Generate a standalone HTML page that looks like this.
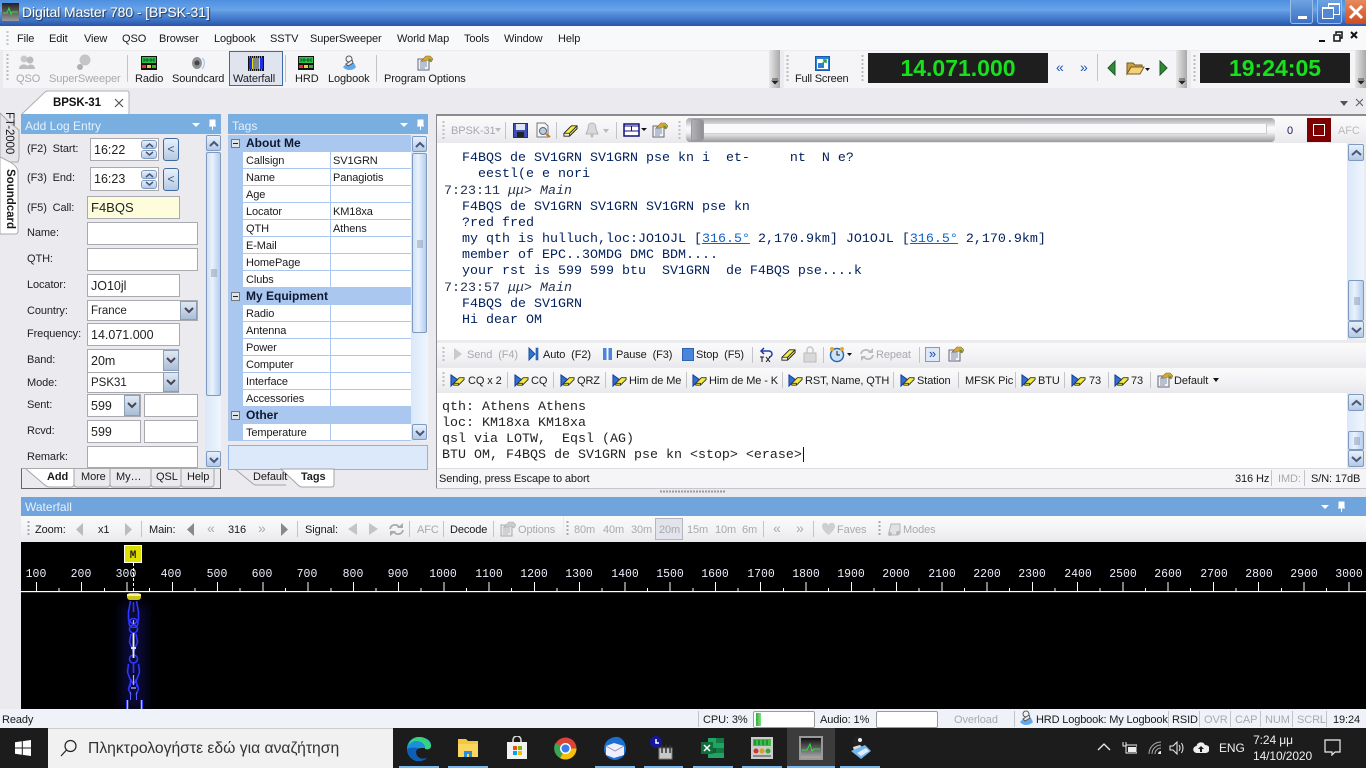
<!DOCTYPE html>
<html lang="en"><head><meta charset="utf-8"><title>Digital Master 780</title>
<style>
html,body{margin:0;padding:0}
body{width:1366px;height:768px;overflow:hidden;position:relative;background:#ebeaef;font:11px/16px "Liberation Sans",sans-serif;letter-spacing:-.1px;color:#1a1a1a}
div,span,svg{position:absolute}
span{white-space:nowrap;margin-top:1px}
svg text{letter-spacing:0}
.g{color:#a9a9ad}
.m{font:13.33px/22px "Liberation Mono",monospace;color:#00205c;letter-spacing:0}
.d{color:#27324e}
.n{color:#222}
.l{color:#0d62c9;text-decoration:underline}
.h{height:20px;color:#e6f0fb;font-size:12px;line-height:24px;letter-spacing:0;padding-left:4px;box-sizing:border-box;background:#79aee0}
.tb{background:linear-gradient(#fafafb,#f4f4f6 50%,#e9e9ed)}
.in{background:#fff;border:1px solid #a9a9b0;box-sizing:border-box;font-size:12.5px;line-height:22px;letter-spacing:0;padding-left:3px;color:#222}
.lb{color:#222}
.sb{background:linear-gradient(90deg,#dbe8f9,#eef5fe)}
.sbt{box-sizing:border-box;border:1px solid #7e9ac0;border-radius:2px;background:linear-gradient(90deg,#cfe0f5,#e9f2fd 40%,#b5cdec)}
.sbb{box-sizing:border-box;border:1px solid #7e9ac0;border-radius:2px;background:linear-gradient(#e8f1fc,#b4c9e4);color:#45577a;text-align:center}
.dd{box-sizing:border-box;border:1px solid #8d9db3;background:linear-gradient(#dfe9f5,#a9bdd6)}
.sep{width:1px;background:#c4c4c8}
.row{left:243px;width:167px;height:16px;background:#fff;line-height:18px}
.cat{left:228px;width:183px;height:17px;background:#a9c7ef;font-weight:bold;font-size:12px;line-height:17px;letter-spacing:0;color:#101830}
.v{left:330px;width:80px;height:16px;background:#fff;border-left:1px solid #a9c7ef;line-height:18px}
.row span,.v span,.cat span,.tabt{margin-top:0}
.pm{left:231px;width:9px;height:9px;background:#dfe3ea;border:1px solid #777;box-sizing:border-box}
.pm:after{content:"";position:absolute;left:1px;top:3px;width:5px;height:1px;background:#222}
.tabt{top:470px;line-height:14px}
.ub{top:766px;height:2px;background:#78b8ec}
</style></head><body>
<svg width="0" height="0" style="left:0;top:0"><defs>
<symbol id="er" viewBox="0 0 16 16"><path d="M1 11 9 3h6v3l-8 8H1z" fill="#f5ee4a" stroke="#222"/><path d="M1 11h6v3M7 11l8-8" fill="none" stroke="#222"/><path d="M1.500 11.500h5v2h-5z" fill="#eee"/></symbol>
<symbol id="ma" viewBox="0 0 16 16"><path d="M1 2l7 5-7 7z" fill="#2e6fd8" stroke="#123a8c"/><path d="M4 11 10 5h5v2l-6 6H4z" fill="#f3ec38" stroke="#333"/><path d="M4 11h5v2" fill="none" stroke="#333"/></symbol>
<symbol id="ra" viewBox="0 0 16 16"><rect width="16" height="14" fill="#111"/><rect x="1" y="1" width="14" height="6" fill="#2fc04a"/><path d="M3 2v4M6 2v4M10 2v4M13 2v4M3 4h10" stroke="#062" fill="none"/><rect x="1" y="9" width="4" height="3" fill="#e33"/><rect x="6" y="9" width="4" height="3" fill="#ec3"/><rect x="11" y="9" width="4" height="3" fill="#4a4"/></symbol>
<symbol id="op" viewBox="0 0 16 16"><rect x="1" y="4" width="11" height="11" fill="#f3f3f6" stroke="#667"/><path d="M3 7h7M3 9h7M3 11h7M3 13h5" stroke="#7a8fb0"/><path d="M4 6 9 1h4l3 3-2 3-3-2-3 1z" fill="#d7a83a" stroke="#8a6a15" stroke-width=".6"/><path d="M11 3l4 2-2 2z" fill="#5b9a3b"/></symbol>
<symbol id="gop" viewBox="0 0 16 16"><rect x="1" y="4" width="11" height="11" fill="#e6e6e8" stroke="#aaa"/><path d="M3 7h7M3 9h7M3 11h7M3 13h5" stroke="#bbb"/><path d="M4 6 9 1h4l3 3-2 3-3-2-3 1z" fill="#ccc" stroke="#aaa" stroke-width=".6"/></symbol>
</defs></svg>

<!-- title bar -->
<div style="left:0;top:0;width:1366px;height:26px;background:linear-gradient(#4d8fdf,#6aa5ea 40%,#5d97df 45%,#3a6fc4 80%,#2b55a5)"></div>
<svg style="left:2px;top:2px" width="17" height="20"><rect width="17" height="18" y="1" fill="url(#tg)"/><defs><linearGradient id="tg" x2="0" y2="1"><stop offset="0" stop-color="#222"/><stop offset="1" stop-color="#999"/></linearGradient></defs><path d="M1 11h4l2-5 2 6 1-2h6" stroke="#2fe03f" fill="none"/></svg>
<span style="left:22px;top:2px;color:#fff;font-size:14px;line-height:18px;text-shadow:1px 1px 1px #234">Digital Master 780 - [BPSK-31]</span>
<div style="left:1290px;top:0;width:23px;height:24px;box-sizing:border-box;border:1px solid #9bbde8;border-top:0;border-radius:0 0 3px 3px;background:linear-gradient(#6ea3e2,#3a71c5)"><div style="left:7px;top:16px;width:9px;height:3px;background:#fff"></div></div>
<div style="left:1317px;top:0;width:25px;height:24px;box-sizing:border-box;border:1px solid #9bbde8;border-top:0;border-radius:0 0 3px 3px;background:linear-gradient(#6ea3e2,#3a71c5)"><div style="left:10px;top:3px;width:10px;height:9px;border:1px solid #fff;border-top-width:2px"></div><div style="left:4px;top:7px;width:10px;height:9px;border:1px solid #fff;border-top-width:2px;background:#5288d2"></div></div>
<div style="left:1345px;top:0;width:21px;height:24px;background:linear-gradient(#e88a5c,#cf4a22);border-radius:0 0 0 3px"><svg style="left:3px;top:4px" width="16" height="16"><path d="M2 2l12 12M14 2 2 14" stroke="#fff" stroke-width="3"/></svg></div>

<!-- menu bar -->
<div style="left:0;top:26px;width:1366px;height:24px;background:#f8f9fa"></div>
<svg style="left:6px;top:31px" width="3" height="14"><path d="M1.500 0v14" stroke="#c4c4c4" stroke-width="2" stroke-dasharray="2 2"/></svg>
<span style="left:17px;top:30px">File</span><span style="left:49px;top:30px">Edit</span><span style="left:84px;top:30px">View</span><span style="left:122px;top:30px">QSO</span><span style="left:159px;top:30px">Browser</span><span style="left:214px;top:30px">Logbook</span><span style="left:270px;top:30px">SSTV</span><span style="left:310px;top:30px">SuperSweeper</span><span style="left:397px;top:30px">World Map</span><span style="left:464px;top:30px">Tools</span><span style="left:504px;top:30px">Window</span><span style="left:558px;top:30px">Help</span>
<svg style="left:1318px;top:30px" width="46" height="14"><path d="M1 11h6" stroke="#111" stroke-width="2"/><rect x="16" y="5" width="6" height="6" fill="none" stroke="#111" stroke-width="1.500"/><path d="M18 4V2h6v6h-2" fill="none" stroke="#111" stroke-width="1.500"/><path d="M33 2l6 6M39 2l-6 6" stroke="#111" stroke-width="2"/></svg>

<!-- main toolbar -->
<div style="left:0;top:50px;width:1366px;height:38px;background:#ebeaef"></div>
<div style="left:3px;top:51px;width:766px;height:37px;background:#f5f5f7"></div>
<div style="left:769px;top:50px;width:11px;height:38px;background:linear-gradient(90deg,#e8e8e8,#a9a9a9)"></div>
<div style="left:784px;top:51px;width:75px;height:37px;background:#f5f5f7"></div>
<div style="left:859px;top:51px;width:317px;height:37px;background:#f5f5f7"></div>
<div style="left:1176px;top:50px;width:11px;height:38px;background:linear-gradient(90deg,#e8e8e8,#a9a9a9)"></div>
<div style="left:1191px;top:51px;width:164px;height:37px;background:#f5f5f7"></div>
<div style="left:1355px;top:50px;width:11px;height:38px;background:linear-gradient(90deg,#e8e8e8,#a9a9a9)"></div>
<svg style="left:771px;top:78px" width="8" height="8"><path d="M1 1h6M1 3h6l-3 3z" fill="#222" stroke="#222" stroke-width=".7"/></svg>
<svg style="left:1178px;top:78px" width="8" height="8"><path d="M1 1h6M1 3h6l-3 3z" fill="#222" stroke="#222" stroke-width=".7"/></svg>
<svg style="left:1357px;top:78px" width="8" height="8"><path d="M1 1h6M1 3h6l-3 3z" fill="#222" stroke="#222" stroke-width=".7"/></svg>
<svg style="left:6px;top:53px" width="3" height="30"><path d="M1.500 1v28" stroke="#bbb" stroke-width="2" stroke-dasharray="2 2"/></svg>
<svg style="left:786px;top:54px" width="3" height="28"><path d="M1.500 1v26" stroke="#bbb" stroke-width="2" stroke-dasharray="2 2"/></svg>
<svg style="left:861px;top:54px" width="3" height="28"><path d="M1.500 1v26" stroke="#bbb" stroke-width="2" stroke-dasharray="2 2"/></svg>
<svg style="left:1193px;top:54px" width="3" height="28"><path d="M1.500 1v26" stroke="#bbb" stroke-width="2" stroke-dasharray="2 2"/></svg>
<svg style="left:18px;top:54px" width="18" height="17"><circle cx="6" cy="5" r="3.500" fill="#c9c9cb"/><circle cx="12" cy="6" r="3.500" fill="#bbb"/><path d="M1 15c0-6 9-6 9-1v1zM8 15c1-6 9-6 9 0z" fill="#bdbdc0"/></svg>
<svg style="left:76px;top:54px" width="16" height="17"><circle cx="9" cy="6" r="5.500" fill="#c5c5c7"/><circle cx="4" cy="13" r="3" fill="#b0b0b3"/></svg>
<svg style="left:141px;top:56px" width="16" height="14"><use href="#ra" width="16" height="16"/></svg>
<svg style="left:190px;top:55px" width="16" height="16"><ellipse cx="7" cy="8" rx="5" ry="6" fill="#8f8f96"/><circle cx="7" cy="8" r="2.500" fill="#444"/><path d="M12 3c3 2 3 8 0 11" stroke="#9db8e6" fill="none"/></svg>
<div style="left:229px;top:51px;width:54px;height:35px;box-sizing:border-box;background:#e0e4ef;border:1px solid #3c6aa8"></div>
<svg style="left:248px;top:56px" width="16" height="15"><rect width="16" height="15" fill="#111"/><rect x="1" y="2" width="14" height="11" fill="#1c2fe0"/><rect x="4" y="2" width="8" height="11" fill="#e4e02c"/><path d="M6 2v11M8 2v11M10 2v11" stroke="#1c2fe0"/><path d="M1 1h14M1 14h14" stroke="#fff" stroke-dasharray="1 1"/></svg>
<svg style="left:298px;top:56px" width="16" height="14"><use href="#ra" width="16" height="16"/></svg>
<svg style="left:341px;top:55px" width="16" height="17"><path d="M2 12c3 4 10 4 13 0l-2-4-8 1z" fill="#63a8e8"/><circle cx="8" cy="4" r="3" fill="none" stroke="#555"/><path d="M5 9l6-4 1 3-5 3z" fill="#eee" stroke="#555"/></svg>
<svg style="left:417px;top:55px" width="16" height="16"><use href="#op" width="16" height="16"/></svg>
<div class="sep" style="left:127px;top:55px;height:27px"></div><div class="sep" style="left:285px;top:55px;height:27px"></div><div class="sep" style="left:376px;top:55px;height:27px"></div>
<span class="g" style="left:16px;top:70px">QSO</span><span class="g" style="left:49px;top:70px">SuperSweeper</span><span style="left:135px;top:70px">Radio</span><span style="left:172px;top:70px">Soundcard</span><span style="left:233px;top:70px">Waterfall</span><span style="left:295px;top:70px">HRD</span><span style="left:328px;top:70px">Logbook</span><span style="left:384px;top:70px">Program Options</span>
<svg style="left:815px;top:56px" width="15" height="15"><rect x=".5" y=".5" width="14" height="14" fill="#2a7fd6" stroke="#1a5aa8"/><rect x="2" y="3" width="11" height="10" fill="#fff"/><rect x="3" y="7" width="6" height="5" fill="#2a7fd6"/><path d="M7 8l4-4M8 4h3v3" stroke="#2a9c3a" stroke-width="1.500" fill="none"/></svg>
<span style="left:795px;top:70px;letter-spacing:-.2px">Full Screen</span>
<div style="left:868px;top:53px;width:180px;height:30px;background:#1e1e1e;color:#18e01c;font:bold 23px/30px 'Liberation Sans',sans-serif;letter-spacing:0;text-align:center">14.071.000</div>
<span style="left:1056px;top:58px;color:#1c4fb8;font-size:14px;line-height:16px">«</span><span style="left:1080px;top:58px;color:#1c4fb8;font-size:14px;line-height:16px">»</span>
<div class="sep" style="left:1097px;top:54px;height:27px"></div>
<svg style="left:1107px;top:60px" width="9" height="16"><path d="M8 1v14L1 8z" fill="#2f8a35" stroke="#1d5b22"/></svg>
<svg style="left:1126px;top:60px" width="24" height="16"><path d="M1 3h6l2 2h7v2H5L1 14z" fill="#c9a048" stroke="#7a5c1c"/><path d="M1 14 5 7h13l-4 7z" fill="#f3d27a" stroke="#7a5c1c"/><path d="M19 8h5l-2.500 3z" fill="#111"/></svg>
<svg style="left:1159px;top:60px" width="9" height="16"><path d="M1 1v14l7-7z" fill="#2f8a35" stroke="#1d5b22"/></svg>
<div style="left:1200px;top:53px;width:150px;height:30px;background:#1e1e1e;color:#18e01c;font:bold 23px/30px 'Liberation Sans',sans-serif;letter-spacing:0;text-align:center">19:24:05</div>

<!-- doc tab strip -->
<svg style="left:20px;top:90px" width="112" height="24"><path d="M2 24 25 2q1-1 3-1h79q2 0 2 2v21" fill="#fff" stroke="#b0b0b4"/></svg>
<span style="left:53px;top:94px;font-weight:bold;font-size:11.5px;color:#111">BPSK-31</span>
<svg style="left:114px;top:98px" width="10" height="10"><path d="M1 1l8 8M9 1 1 9" stroke="#555" stroke-width="1.200"/></svg>
<svg style="left:1339px;top:98px" width="24" height="10"><path d="M1 3h8L5 8z" fill="#555"/><path d="M17 1l7 7M24 1l-7 7" stroke="#666" stroke-width="1.200"/></svg>

<!-- side tabs -->
<svg style="left:0;top:112px" width="21" height="125"><path d="M0 1 8 9 19 18V46L18 50H0z" fill="#e6e6ea" stroke="#aaa"/><path d="M0 45 10 50q7 4 8 9v60q0 3-3 3H0z" fill="#fff" stroke="#aaa"/></svg>
<span style="left:-14px;top:126px;transform:rotate(90deg);width:46px;height:16px;font-size:11.5px">FT-2000</span>
<span style="left:-17px;top:187px;transform:rotate(90deg);font-weight:bold;font-size:11.5px;letter-spacing:0;width:54px;height:16px">Soundcard</span>

<!-- Add Log Entry -->
<div class="h" style="left:21px;top:114px;width:200px">Add Log Entry</div>
<svg style="left:191px;top:119px" width="28" height="12"><path d="M1 4h8L5 8z" fill="#fff"/><path d="M19 1h5v6h-5zM21.500 7v4M18 7h7" fill="#fff" stroke="#fff"/></svg>
<span class="lb" style="left:27px;top:140px">(F2)&nbsp; Start:</span>
<div class="in" style="left:90px;top:138px;width:69px;height:23px">16:22</div>
<div class="sbb" style="left:141px;top:140px;width:16px;height:9px;border-radius:3px"><svg style="left:3px;top:1px" width="9" height="6"><path d="M1 5l3.500-3L8 5" fill="none" stroke="#45577a" stroke-width="1.500"/></svg></div>
<div class="sbb" style="left:141px;top:150px;width:16px;height:9px;border-radius:3px"><svg style="left:3px;top:0" width="9" height="6"><path d="M1 1l3.500 3L8 1" fill="none" stroke="#45577a" stroke-width="1.500"/></svg></div>
<div class="sbb" style="left:163px;top:138px;width:16px;height:23px;font-size:12px;line-height:21px;border-color:#3e6aa0;border-radius:3px">&lt;</div>
<span class="lb" style="left:27px;top:169px">(F3)&nbsp; End:</span>
<div class="in" style="left:90px;top:167px;width:69px;height:24px">16:23</div>
<div class="sbb" style="left:141px;top:170px;width:16px;height:9px;border-radius:3px"><svg style="left:3px;top:1px" width="9" height="6"><path d="M1 5l3.500-3L8 5" fill="none" stroke="#45577a" stroke-width="1.500"/></svg></div>
<div class="sbb" style="left:141px;top:180px;width:16px;height:9px;border-radius:3px"><svg style="left:3px;top:0" width="9" height="6"><path d="M1 1l3.500 3L8 1" fill="none" stroke="#45577a" stroke-width="1.500"/></svg></div>
<div class="sbb" style="left:163px;top:168px;width:16px;height:23px;font-size:12px;line-height:21px;border-color:#3e6aa0;border-radius:3px">&lt;</div>
<span class="lb" style="left:27px;top:199px">(F5)&nbsp; Call:</span>
<div class="in" style="left:87px;top:196px;width:93px;height:23px;background:#fdfddb;font-size:13px">F4BQS</div>
<span class="lb" style="left:27px;top:224px">Name:</span><div class="in" style="left:87px;top:222px;width:111px;height:23px"></div>
<span class="lb" style="left:27px;top:250px">QTH:</span><div class="in" style="left:87px;top:248px;width:111px;height:23px"></div>
<span class="lb" style="left:27px;top:276px">Locator:</span><div class="in" style="left:87px;top:274px;width:93px;height:23px">JO10jl</div>
<span class="lb" style="left:27px;top:302px">Country:</span><div class="in" style="left:87px;top:300px;width:111px;height:21px;font-size:11.5px;line-height:21px">France</div>
<span class="lb" style="left:27px;top:325px">Frequency:</span><div class="in" style="left:87px;top:323px;width:93px;height:23px">14.071.000</div>
<span class="lb" style="left:27px;top:351px">Band:</span><div class="in" style="left:87px;top:349px;width:92px;height:24px">20m</div>
<span class="lb" style="left:27px;top:374px">Mode:</span><div class="in" style="left:87px;top:372px;width:92px;height:21px;font-size:11.5px;line-height:20px">PSK31</div>
<span class="lb" style="left:27px;top:396px">Sent:</span><div class="in" style="left:87px;top:394px;width:54px;height:23px">599</div><div class="in" style="left:144px;top:394px;width:54px;height:23px"></div>
<span class="lb" style="left:27px;top:422px">Rcvd:</span><div class="in" style="left:87px;top:420px;width:54px;height:23px">599</div><div class="in" style="left:144px;top:420px;width:54px;height:23px"></div>
<span class="lb" style="left:27px;top:448px">Remark:</span><div class="in" style="left:87px;top:446px;width:111px;height:22px"></div>
<div class="dd" style="left:180px;top:301px;width:17px;height:19px"><svg style="left:3px;top:5px" width="10" height="8"><path d="M1 1l4 4 4-4" fill="none" stroke="#445" stroke-width="2"/></svg></div>
<div class="dd" style="left:163px;top:350px;width:16px;height:21px"><svg style="left:2px;top:6px" width="10" height="8"><path d="M1 1l4 4 4-4" fill="none" stroke="#445" stroke-width="2"/></svg></div>
<div class="dd" style="left:163px;top:372px;width:16px;height:20px"><svg style="left:2px;top:6px" width="10" height="8"><path d="M1 1l4 4 4-4" fill="none" stroke="#445" stroke-width="2"/></svg></div>
<div class="dd" style="left:124px;top:395px;width:16px;height:21px"><svg style="left:2px;top:6px" width="10" height="8"><path d="M1 1l4 4 4-4" fill="none" stroke="#445" stroke-width="2"/></svg></div>
<div class="sb" style="left:205px;top:134px;width:16px;height:334px"></div>
<div class="sbb" style="left:206px;top:135px;width:15px;height:16px"><svg style="left:2px;top:4px" width="10" height="8"><path d="M1 6l4-4 4 4" fill="none" stroke="#45577a" stroke-width="2"/></svg></div>
<div class="sbt" style="left:206px;top:152px;width:15px;height:244px"><svg style="left:3px;top:116px" width="8" height="8"><path d="M1 1h6M1 3h6M1 5h6M1 7h6" stroke="#8a9cb5"/></svg></div>
<div class="sbb" style="left:206px;top:451px;width:15px;height:16px"><svg style="left:2px;top:5px" width="10" height="8"><path d="M1 1l4 4 4-4" fill="none" stroke="#45577a" stroke-width="2"/></svg></div>
<div style="left:21px;top:468px;width:200px;height:21px;box-sizing:border-box;border:1px solid #666;border-top:1px solid #aaa;background:#ebeaef"></div>
<svg style="left:21px;top:468px" width="196" height="20"><path d="M5 1 25 18q2 1 4 1h22q2-1 2-3V1" fill="#fff" stroke="#a4a4a8"/><path d="M53 1v16q1 2 3 2h31q2-1 2-3V1M89 17q1 2 3 2h36q2-1 2-3V1M130 17q1 2 3 2h25q2-1 2-3V1M160 17q1 2 3 2h28q2-1 2-3V1" fill="none" stroke="#a4a4a8"/></svg>
<span class="tabt" style="left:47px;font-weight:bold">Add</span><span class="tabt" style="left:81px">More</span><span class="tabt" style="left:116px">My…</span><span class="tabt" style="left:156px">QSL</span><span class="tabt" style="left:187px">Help</span>

<!-- Tags -->
<div class="h" style="left:228px;top:114px;width:200px">Tags</div>
<svg style="left:399px;top:119px" width="28" height="12"><path d="M1 4h8L5 8z" fill="#fff"/><path d="M19 1h5v6h-5zM21.500 7v4M18 7h7" fill="#fff" stroke="#fff"/></svg>
<div style="left:228px;top:135px;width:183px;height:306px;background:#a9c7ef"></div>
<div class="cat" style="top:135px"><span style="left:18px">About Me</span></div><div class="pm" style="top:139px"></div>
<div class="row" style="top:152px"><span style="left:3px">Callsign</span></div><div class="v" style="top:152px"><span style="left:2px">SV1GRN</span></div>
<div class="row" style="top:169px"><span style="left:3px">Name</span></div><div class="v" style="top:169px"><span style="left:2px">Panagiotis</span></div>
<div class="row" style="top:186px"><span style="left:3px">Age</span></div><div class="v" style="top:186px"></div>
<div class="row" style="top:203px"><span style="left:3px">Locator</span></div><div class="v" style="top:203px"><span style="left:2px">KM18xa</span></div>
<div class="row" style="top:220px"><span style="left:3px">QTH</span></div><div class="v" style="top:220px"><span style="left:2px">Athens</span></div>
<div class="row" style="top:237px"><span style="left:3px">E-Mail</span></div><div class="v" style="top:237px"></div>
<div class="row" style="top:254px"><span style="left:3px">HomePage</span></div><div class="v" style="top:254px"></div>
<div class="row" style="top:271px"><span style="left:3px">Clubs</span></div><div class="v" style="top:271px"></div>
<div class="cat" style="top:288px"><span style="left:18px">My Equipment</span></div><div class="pm" style="top:292px"></div>
<div class="row" style="top:305px"><span style="left:3px">Radio</span></div><div class="v" style="top:305px"></div>
<div class="row" style="top:322px"><span style="left:3px">Antenna</span></div><div class="v" style="top:322px"></div>
<div class="row" style="top:339px"><span style="left:3px">Power</span></div><div class="v" style="top:339px"></div>
<div class="row" style="top:356px"><span style="left:3px">Computer</span></div><div class="v" style="top:356px"></div>
<div class="row" style="top:373px"><span style="left:3px">Interface</span></div><div class="v" style="top:373px"></div>
<div class="row" style="top:390px"><span style="left:3px">Accessories</span></div><div class="v" style="top:390px"></div>
<div class="cat" style="top:407px"><span style="left:18px">Other</span></div><div class="pm" style="top:411px"></div>
<div class="row" style="top:424px"><span style="left:3px">Temperature</span></div><div class="v" style="top:424px"></div>
<div class="sb" style="left:411px;top:135px;width:17px;height:306px"></div>
<div class="sbb" style="left:412px;top:136px;width:15px;height:16px"><svg style="left:2px;top:4px" width="10" height="8"><path d="M1 6l4-4 4 4" fill="none" stroke="#45577a" stroke-width="2"/></svg></div>
<div class="sbt" style="left:412px;top:153px;width:15px;height:180px"><svg style="left:3px;top:86px" width="8" height="8"><path d="M1 1h6M1 3h6M1 5h6M1 7h6" stroke="#8a9cb5"/></svg></div>
<div class="sbb" style="left:412px;top:424px;width:15px;height:16px"><svg style="left:2px;top:5px" width="10" height="8"><path d="M1 1l4 4 4-4" fill="none" stroke="#45577a" stroke-width="2"/></svg></div>
<div style="left:228px;top:445px;width:200px;height:25px;box-sizing:border-box;background:#dbe9fb;border:1px solid #8fb2e2"></div>
<svg style="left:234px;top:468px" width="102" height="20"><path d="M1 1 18 15q2 2 4 2h30" fill="none" stroke="#a4a4a8"/><path d="M47 1 64 17q2 2 4 2h30q2 0 2-3V1z" fill="#fff" stroke="#a4a4a8"/></svg>
<span class="tabt" style="left:253px">Default</span><span class="tabt" style="left:301px;font-weight:bold;color:#222">Tags</span>

<!-- Main panel -->
<div style="left:436px;top:114px;width:930px;height:2px;background:#8b8b8f"></div>
<div style="left:436px;top:116px;width:1px;height:372px;background:#8b8b8f"></div>
<div class="tb" style="left:437px;top:116px;width:929px;height:27px"></div>
<svg style="left:442px;top:120px" width="3" height="20"><path d="M1.500 1v18" stroke="#c0c0c0" stroke-width="2" stroke-dasharray="2 2"/></svg>
<span class="g" style="left:451px;top:122px">BPSK-31</span>
<svg style="left:495px;top:128px" width="7" height="5"><path d="M0 0h6L3 4z" fill="#bbb"/></svg>
<div class="sep" style="left:505px;top:122px;height:17px"></div>
<svg style="left:513px;top:123px" width="15" height="15"><rect x=".5" y=".5" width="14" height="14" fill="#3f4fb8" stroke="#22307c"/><rect x="3" y="1" width="9" height="6" fill="#dfe3f6"/><rect x="4" y="9" width="7" height="5" fill="#222"/></svg>
<svg style="left:535px;top:122px" width="16" height="16"><path d="M2 1h8l3 3v11H2z" fill="#f6f6f6" stroke="#777"/><circle cx="8" cy="9" r="3.500" fill="#bcd" stroke="#567"/><path d="M11 12l4 3" stroke="#c6761c" stroke-width="2"/></svg>
<div class="sep" style="left:556px;top:122px;height:17px"></div>
<svg style="left:563px;top:123px" width="15" height="15"><use href="#er" width="15" height="15"/></svg>
<svg style="left:585px;top:122px" width="14" height="16"><path d="M7 1c4 0 4 4 4 6l2 5H1l2-5c0-2 0-6 4-6z" fill="#d8d8da" stroke="#b5b5b8"/><circle cx="7" cy="14" r="1.500" fill="#bbb"/></svg>
<svg style="left:603px;top:129px" width="7" height="5"><path d="M0 0h6L3 4z" fill="#bbb"/></svg>
<div class="sep" style="left:616px;top:122px;height:17px"></div>
<svg style="left:623px;top:123px" width="24" height="14"><rect x="1" y="1" width="15" height="12" fill="#fff" stroke="#10107c" stroke-width="1.500"/><path d="M1 3h15M1 8h15M8.500 3v5" stroke="#10107c"/><path d="M18 5h6l-3 3z" fill="#111"/></svg>
<svg style="left:652px;top:122px" width="16" height="16"><use href="#op" width="16" height="16"/></svg>
<svg style="left:678px;top:120px" width="3" height="20"><path d="M1.500 1v18" stroke="#c0c0c0" stroke-width="2" stroke-dasharray="2 2"/></svg>
<div style="left:686px;top:118px;width:589px;height:24px;border-radius:4px;background:linear-gradient(#a5a5a9,#d8d8da 25%,#fafafa 40%,#f2f2f3 60%,#bdbdc0 85%,#98989c)"></div>
<div style="left:691px;top:119px;width:13px;height:22px;border-radius:3px;box-sizing:border-box;border:1px solid #9a9a9e;background:linear-gradient(90deg,#b2b2b6,#8f8f93)"></div>
<div style="left:704px;top:124px;width:563px;height:10px;box-sizing:border-box;border-right:1px solid #c8c8cc;border-bottom:1px solid #d0d0d5;background:#f9f9fb"></div>
<span style="left:1287px;top:122px;color:#20185e">0</span>
<div style="left:1307px;top:118px;width:24px;height:24px;background:#7c0000"><div style="left:6px;top:6px;width:10px;height:10px;border:1px solid #fff"></div></div>
<span class="g" style="left:1338px;top:122px;color:#bbb">AFC</span>

<div style="left:437px;top:143px;width:910px;height:197px;background:#fff"></div>
<div class="sb" style="left:1347px;top:143px;width:17px;height:197px"></div>
<div class="sbb" style="left:1348px;top:144px;width:16px;height:17px"><svg style="left:2px;top:4px" width="11" height="8"><path d="M1 6l4.500-4L10 6" fill="none" stroke="#45577a" stroke-width="2"/></svg></div>
<div class="sbt" style="left:1348px;top:280px;width:16px;height:41px"><svg style="left:4px;top:16px" width="8" height="8"><path d="M1 1h6M1 3h6M1 5h6M1 7h6" stroke="#8a9cb5"/></svg></div>
<div class="sbb" style="left:1348px;top:321px;width:16px;height:17px"><svg style="left:2px;top:5px" width="11" height="8"><path d="M1 1l4.500 4L10 1" fill="none" stroke="#45577a" stroke-width="2"/></svg></div>
<span class="m" style="left:462px;top:147px;white-space:pre">F4BQS de SV1GRN SV1GRN pse kn i  et-     nt  N e?</span>
<span class="m" style="left:478px;top:163px;white-space:pre">eestl(e e nori</span>
<span class="m d" style="left:444px;top:180px;white-space:pre">7:23:11 <i>μμ&gt; Main</i></span>
<span class="m" style="left:462px;top:196px;white-space:pre">F4BQS de SV1GRN SV1GRN SV1GRN pse kn</span>
<span class="m" style="left:462px;top:212px;white-space:pre">?red fred</span>
<span class="m" style="left:462px;top:228px;white-space:pre">my qth is hulluch,loc:JO1OJL [<span class="l" style="position:static">316.5°</span> 2,170.9km] JO1OJL [<span class="l" style="position:static">316.5°</span> 2,170.9km]</span>
<span class="m" style="left:462px;top:244px;white-space:pre">member of EPC..3OMDG DMC BDM....</span>
<span class="m" style="left:462px;top:260px;white-space:pre">your rst is 599 599 btu  SV1GRN  de F4BQS pse....k</span>
<span class="m d" style="left:444px;top:277px;white-space:pre">7:23:57 <i>μμ&gt; Main</i></span>
<span class="m" style="left:462px;top:293px;white-space:pre">F4BQS de SV1GRN</span>
<span class="m" style="left:462px;top:309px;white-space:pre">Hi dear OM</span>

<!-- Toolbar 2 -->
<div class="tb" style="left:437px;top:343px;width:929px;height:24px"></div>
<svg style="left:442px;top:346px" width="3" height="18"><path d="M1.500 1v16" stroke="#c0c0c0" stroke-width="2" stroke-dasharray="2 2"/></svg>
<svg style="left:453px;top:347px" width="10" height="14"><path d="M1 1v12l8-6z" fill="#c9c9cc"/></svg>
<span class="g" style="left:467px;top:346px">Send&nbsp; (F4)</span>
<svg style="left:528px;top:347px" width="11" height="14"><path d="M1 1v12l6-6z" fill="#2d74d4" stroke="#1c5099"/><path d="M8 1h2v12H8z" fill="#2d74d4" stroke="#1c5099" stroke-width=".6"/></svg>
<span style="left:543px;top:346px">Auto&nbsp; (F2)</span>
<svg style="left:602px;top:347px" width="11" height="14"><rect x="1" y="1" width="3.500" height="12" fill="#4a85dc"/><rect x="6.500" y="1" width="3.500" height="12" fill="#4a85dc"/></svg>
<span style="left:616px;top:346px">Pause&nbsp; (F3)</span>
<div style="left:682px;top:348px;width:10px;height:11px;background:#4a85dc;border:1px solid #2e62b4"></div>
<span style="left:696px;top:346px">Stop&nbsp; (F5)</span>
<div class="sep" style="left:752px;top:347px;height:16px"></div>
<svg style="left:759px;top:346px" width="14" height="17"><path d="M2 5h8a3 3 0 0 1 0 6" fill="none" stroke="#1a3ea8" stroke-width="1.500"/><path d="M5 2 2 5l3 3" fill="none" stroke="#1a3ea8" stroke-width="1.500"/><path d="M1 11h4M3 11v5M7 11l4 5M11 11l-4 5" stroke="#111"/></svg>
<svg style="left:781px;top:347px" width="15" height="15"><use href="#er" width="15" height="15"/></svg>
<svg style="left:803px;top:346px" width="14" height="17"><rect x="1" y="7" width="12" height="9" fill="#d8d8da" stroke="#bbb"/><path d="M4 7V4a3 3 0 0 1 6 0v3" fill="none" stroke="#c5c5c7" stroke-width="1.500"/></svg>
<div class="sep" style="left:823px;top:347px;height:16px"></div>
<svg style="left:829px;top:346px" width="24" height="17"><circle cx="8" cy="9" r="6.500" fill="#cfe3f7" stroke="#2a68b8" stroke-width="1.500"/><circle cx="3" cy="3" r="2" fill="#e8a82c"/><circle cx="13" cy="3" r="2" fill="#e8a82c"/><path d="M8 5v4h3" stroke="#222" fill="none"/><path d="M18 7h5l-2.500 3z" fill="#111"/></svg>
<svg style="left:859px;top:347px" width="16" height="15"><path d="M2 7a5 5 0 0 1 9-2M14 8a5 5 0 0 1-9 2" fill="none" stroke="#bbb" stroke-width="1.800"/><path d="M9 6h5V1zM7 9H2v5z" fill="#bbb"/></svg>
<span class="g" style="left:876px;top:346px">Repeat</span>
<div class="sep" style="left:919px;top:347px;height:16px"></div>
<div style="left:925px;top:347px;width:15px;height:15px;box-sizing:border-box;border:1px solid #7d9cc6;background:#dfe8f6;color:#1c3fa8;font-size:13px;line-height:12px;text-align:center">»</div>
<svg style="left:948px;top:346px" width="16" height="16"><use href="#op" width="16" height="16"/></svg>

<!-- Toolbar 3 -->
<div class="tb" style="left:437px;top:368px;width:929px;height:25px"></div>
<svg style="left:442px;top:371px" width="3" height="18"><path d="M1.500 1v16" stroke="#c0c0c0" stroke-width="2" stroke-dasharray="2 2"/></svg>
<svg style="left:450px;top:373px" width="15" height="15"><use href="#ma" width="15" height="15"/></svg><span style="left:468px;top:372px">CQ x 2</span><div class="sep" style="left:507px;top:372px;height:16px"></div>
<svg style="left:514px;top:373px" width="15" height="15"><use href="#ma" width="15" height="15"/></svg><span style="left:531px;top:372px">CQ</span><div class="sep" style="left:553px;top:372px;height:16px"></div>
<svg style="left:560px;top:373px" width="15" height="15"><use href="#ma" width="15" height="15"/></svg><span style="left:577px;top:372px">QRZ</span><div class="sep" style="left:605px;top:372px;height:16px"></div>
<svg style="left:612px;top:373px" width="15" height="15"><use href="#ma" width="15" height="15"/></svg><span style="left:629px;top:372px">Him de Me</span><div class="sep" style="left:686px;top:372px;height:16px"></div>
<svg style="left:692px;top:373px" width="15" height="15"><use href="#ma" width="15" height="15"/></svg><span style="left:709px;top:372px">Him de Me - K</span><div class="sep" style="left:782px;top:372px;height:16px"></div>
<svg style="left:788px;top:373px" width="15" height="15"><use href="#ma" width="15" height="15"/></svg><span style="left:805px;top:372px">RST, Name, QTH</span><div class="sep" style="left:893px;top:372px;height:16px"></div>
<svg style="left:900px;top:373px" width="15" height="15"><use href="#ma" width="15" height="15"/></svg><span style="left:917px;top:372px">Station</span><div class="sep" style="left:958px;top:372px;height:16px"></div>
<span style="left:965px;top:372px">MFSK Pic</span><div class="sep" style="left:1015px;top:372px;height:16px"></div>
<svg style="left:1021px;top:373px" width="15" height="15"><use href="#ma" width="15" height="15"/></svg><span style="left:1038px;top:372px">BTU</span><div class="sep" style="left:1064px;top:372px;height:16px"></div>
<svg style="left:1071px;top:373px" width="15" height="15"><use href="#ma" width="15" height="15"/></svg><span style="left:1089px;top:372px">73</span><div class="sep" style="left:1108px;top:372px;height:16px"></div>
<svg style="left:1114px;top:373px" width="15" height="15"><use href="#ma" width="15" height="15"/></svg><span style="left:1131px;top:372px">73</span><div class="sep" style="left:1150px;top:372px;height:16px"></div>
<svg style="left:1157px;top:372px" width="16" height="16"><use href="#op" width="16" height="16"/></svg><span style="left:1174px;top:372px">Default</span>
<svg style="left:1213px;top:378px" width="7" height="5"><path d="M0 0h6L3 4z" fill="#111"/></svg>

<div style="left:437px;top:393px;width:910px;height:75px;background:#fff"></div>
<div class="sb" style="left:1347px;top:393px;width:17px;height:75px"></div>
<div class="sbb" style="left:1348px;top:394px;width:16px;height:17px"><svg style="left:2px;top:4px" width="11" height="8"><path d="M1 6l4.500-4L10 6" fill="none" stroke="#45577a" stroke-width="2"/></svg></div>
<div class="sbt" style="left:1348px;top:431px;width:16px;height:19px"><svg style="left:4px;top:5px" width="8" height="8"><path d="M1 1h6M1 3h6M1 5h6M1 7h6" stroke="#8a9cb5"/></svg></div>
<div class="sbb" style="left:1348px;top:450px;width:16px;height:17px"><svg style="left:2px;top:5px" width="11" height="8"><path d="M1 1l4.500 4L10 1" fill="none" stroke="#45577a" stroke-width="2"/></svg></div>
<span class="m n" style="left:442px;top:396px">qth: Athens Athens</span>
<span class="m n" style="left:442px;top:412px">loc: KM18xa KM18xa</span>
<span class="m n" style="left:442px;top:428px">qsl via LOTW,&nbsp; Eqsl (AG)</span>
<span class="m n" style="left:442px;top:444px">BTU OM, F4BQS de SV1GRN pse kn &lt;stop&gt; &lt;erase&gt;</span>
<div style="left:803px;top:447px;width:1px;height:15px;background:#111"></div>

<div style="left:437px;top:468px;width:929px;height:20px;background:#f5f5f7;border-top:1px solid #dcdce0;box-sizing:border-box"></div>
<div style="left:436px;top:488px;width:930px;height:1px;background:#c8c8cc"></div>
<span style="left:439px;top:470px">Sending, press Escape to abort</span>
<span style="left:1235px;top:470px">316 Hz</span><div class="sep" style="left:1271px;top:470px;height:16px"></div>
<span class="g" style="left:1278px;top:470px">IMD:</span><div class="sep" style="left:1304px;top:470px;height:16px"></div>
<span style="left:1311px;top:470px">S/N: 17dB</span>
<svg style="left:660px;top:490px" width="66" height="3"><path d="M0 1.500h66" stroke="#999" stroke-width="2" stroke-dasharray="2 1"/></svg>

<!-- Waterfall -->
<div class="h" style="left:21px;top:497px;width:1345px;height:19px;background:#70a4dc;line-height:21px">Waterfall</div>
<svg style="left:1320px;top:501px" width="44" height="12"><path d="M1 4h8L5 8z" fill="#fff"/><path d="M19 1h5v6h-5zM21.500 7v4M18 7h7" fill="#fff" stroke="#fff"/></svg>
<div class="tb" style="left:21px;top:516px;width:1345px;height:26px"></div>
<svg style="left:27px;top:520px" width="3" height="18"><path d="M1.500 1v16" stroke="#aaa" stroke-width="2" stroke-dasharray="2 2"/></svg>
<span style="left:35px;top:521px">Zoom:</span>
<svg style="left:76px;top:523px" width="8" height="13"><path d="M7 0v13L0 6.500z" fill="#bbb"/></svg><span style="left:98px;top:521px">x1</span><svg style="left:125px;top:523px" width="8" height="13"><path d="M0 0v13l7-6.500z" fill="#bbb"/></svg>
<div class="sep" style="left:141px;top:521px;height:16px"></div>
<span style="left:149px;top:521px">Main:</span>
<svg style="left:187px;top:523px" width="8" height="13"><path d="M7 0v13L0 6.500z" fill="#888"/></svg><span class="g" style="left:207px;top:519px;font-size:14px">«</span><span style="left:228px;top:521px">316</span><span class="g" style="left:258px;top:519px;font-size:14px">»</span><svg style="left:281px;top:523px" width="8" height="13"><path d="M0 0v13l7-6.500z" fill="#888"/></svg>
<div class="sep" style="left:297px;top:521px;height:16px"></div>
<span style="left:305px;top:521px">Signal:</span>
<svg style="left:346px;top:522px" width="60" height="14"><path d="M11 1v12L2 7zM23 1v12l9-6z" fill="#c4c4c7"/><path d="M44 7a5 5 0 0 1 9-2M57 8a5 5 0 0 1-9 2" fill="none" stroke="#aaa" stroke-width="1.800"/><path d="M51 6h6V1zM50 9h-6v5z" fill="#aaa"/></svg>
<div class="sep" style="left:409px;top:521px;height:16px"></div>
<span class="g" style="left:417px;top:521px">AFC</span>
<div class="sep" style="left:443px;top:521px;height:16px"></div>
<span style="left:450px;top:521px">Decode</span>
<div class="sep" style="left:493px;top:521px;height:16px"></div>
<svg style="left:500px;top:521px" width="16" height="16"><use href="#gop" width="16" height="16"/></svg><span class="g" style="left:518px;top:521px">Options</span>
<div style="left:563px;top:516px;width:1px;height:26px;background:#ebeaef"></div>
<svg style="left:566px;top:520px" width="3" height="18"><path d="M1.500 1v16" stroke="#aaa" stroke-width="2" stroke-dasharray="2 2"/></svg>
<span class="g" style="left:574px;top:521px">80m</span><span class="g" style="left:603px;top:521px">40m</span><span class="g" style="left:631px;top:521px">30m</span>
<div style="left:655px;top:518px;width:28px;height:22px;box-sizing:border-box;background:#e2e4ec;border:1px solid #b4b6bf"></div>
<span class="g" style="left:659px;top:521px">20m</span><span class="g" style="left:687px;top:521px">15m</span><span class="g" style="left:715px;top:521px">10m</span><span class="g" style="left:742px;top:521px">6m</span>
<div class="sep" style="left:763px;top:521px;height:16px"></div>
<span class="g" style="left:773px;top:519px;font-size:14px">«</span><span class="g" style="left:796px;top:519px;font-size:14px">»</span>
<div class="sep" style="left:813px;top:521px;height:16px"></div>
<svg style="left:821px;top:522px" width="15" height="14"><path d="M7.500 13C2 9 1 6 1 4c0-4 5-4 6.500-1C9 0 14 0 14 4c0 2-1 5-6.500 9z" fill="#cfcfd2"/></svg><span class="g" style="left:837px;top:521px">Faves</span>
<svg style="left:878px;top:520px" width="3" height="18"><path d="M1.500 1v16" stroke="#aaa" stroke-width="2" stroke-dasharray="2 2"/></svg>
<svg style="left:886px;top:521px" width="16" height="16"><path d="M5 3h9v9l-2 2H3v-3z" fill="#e2e2e4" stroke="#b5b5b8"/><circle cx="4" cy="13" r="2" fill="#bbb"/><circle cx="12" cy="12" r="2" fill="#bbb"/></svg><span class="g" style="left:903px;top:521px">Modes</span>

<div style="left:21px;top:542px;width:1345px;height:167px;background:#000"></div>
<svg style="left:0;top:542px" width="1366" height="167">
<defs><filter id="bl" x="-100%" y="-20%" width="300%" height="140%"><feGaussianBlur stdDeviation="6"/></filter></defs>
<rect x="21" y="49" width="1345" height="1.200" fill="#fff"/>
<path d="M36.500 40v9M81.500 40v9M127 40v9M172.500 40v9M217.500 40v9M263 40v9M308 40v9M353.500 40v9M398.500 40v9M444 40v9M489 40v9M534.500 40v9M579.500 40v9M625 40v9M670 40v9M715.500 40v9M760.500 40v9M806 40v9M851.500 40v9M896.500 40v9M942 40v9M987 40v9M1032.500 40v9M1077.500 40v9M1123 40v9M1168 40v9M1213.500 40v9M1258.500 40v9M1304 40v9M1349 40v9" stroke="#fff"/>
<path d="M59 46v3M104.500 46v3M149.500 46v3M195 46v3M240 46v3M285.500 46v3M331 46v3M376 46v3M421 46v3M466.500 46v3M511.500 46v3M557 46v3M602 46v3M647.500 46v3M693 46v3M738 46v3M783.500 46v3M828.500 46v3M874 46v3M919 46v3M964.500 46v3M1009.500 46v3M1055 46v3M1100 46v3M1145.500 46v3M1190.500 46v3M1236 46v3M1281.500 46v3M1326.500 46v3" stroke="#fff"/>
<g fill="#eef" font-family="Liberation Mono, monospace" font-size="11.500" text-anchor="middle">
<text x="36" y="35">100</text><text x="81" y="35">200</text><text x="126" y="35">300</text><text x="171" y="35">400</text><text x="217" y="35">500</text><text x="262" y="35">600</text><text x="307" y="35">700</text><text x="353" y="35">800</text><text x="398" y="35">900</text><text x="443" y="35">1000</text><text x="489" y="35">1100</text><text x="534" y="35">1200</text><text x="579" y="35">1300</text><text x="625" y="35">1400</text><text x="670" y="35">1500</text><text x="715" y="35">1600</text><text x="761" y="35">1700</text><text x="806" y="35">1800</text><text x="851" y="35">1900</text><text x="896" y="35">2000</text><text x="942" y="35">2100</text><text x="987" y="35">2200</text><text x="1032" y="35">2300</text><text x="1078" y="35">2400</text><text x="1123" y="35">2500</text><text x="1168" y="35">2600</text><text x="1214" y="35">2700</text><text x="1259" y="35">2800</text><text x="1304" y="35">2900</text><text x="1349" y="35">3000</text>
</g>
<rect x="124.500" y="3.500" width="17" height="17" fill="#dfe000" stroke="#fff"/>
<text x="133" y="16" font-family="Liberation Mono, monospace" font-size="11" font-weight="bold" fill="#222" text-anchor="middle">M</text>
<path d="M133.500 21v30" stroke="#fff" stroke-dasharray="3 2"/>
<rect x="127" y="51" width="14" height="7" rx="3" fill="#d8cc10"/><rect x="127" y="52" width="14" height="2" fill="#fff6a0"/>
<rect x="122" y="62" width="24" height="105" fill="#1a1a90" opacity=".4" filter="url(#bl)"/>
<path d="M130.500 59 128.500 70v8l5 5 5-5v-8l-2-11M133.500 60v10M129 81a4.500 4.500 0 1 0 9 0 4.500 4.500 0 1 0-9 0M129.500 87a4 4 0 1 0 8 0 4 4 0 1 0-8 0M131 92 129.500 100l4 10 4-10-1.500-8M129.500 117a4 4 0 1 0 8 0 4 4 0 1 0-8 0M128.500 122l-1 8 2.500 7 3.500 5 3.500-5 2.500-7-1-8M133.500 121v10M130 142l-1.500 5 2.500 6M137 142l1.500 5-2.500 6M131 137l-1 8M136 137l1 8" fill="none" stroke="#2f36ff" stroke-width="1.600"/>
<path d="M133.500 91v25M131 106h5" stroke="#e8ecff" stroke-width="1.800"/>
<path d="M133.500 78v4M133.500 133v10M131 146h5" stroke="#aab2ff" stroke-width="1.200"/>
<path d="M127.500 158v9M141.500 158v9" stroke="#aeb6ff" stroke-width="1.500"/>
<path d="M126.500 158v9M142.500 158v9" stroke="#3a40ff"/>
<path d="M130.500 150v8M136.500 150v8" stroke="#5a60ff"/>
</svg>

<!-- status bar -->
<div style="left:0;top:709px;width:1366px;height:19px;background:#eff3f9"></div>
<span style="left:2px;top:711px">Ready</span>
<div class="sep" style="left:698px;top:711px;height:16px"></div>
<span style="left:703px;top:711px">CPU: 3%</span>
<div style="left:753px;top:711px;width:62px;height:17px;box-sizing:border-box;background:#fff;border:1px solid #9a9aa0;border-radius:2px"><div style="left:2px;top:1px;width:5px;height:13px;background:linear-gradient(90deg,#2fae3c,#7fe07f)"></div></div>
<span style="left:820px;top:711px">Audio: 1%</span>
<div style="left:876px;top:711px;width:62px;height:17px;box-sizing:border-box;background:#fff;border:1px solid #9a9aa0;border-radius:2px"></div>
<span class="g" style="left:954px;top:711px">Overload</span>
<div class="sep" style="left:1014px;top:711px;height:16px"></div>
<svg style="left:1019px;top:710px" width="15" height="17"><path d="M1 12c3 4 9 4 13 0l-2-4-8 1z" fill="#63a8e8"/><circle cx="7" cy="4" r="3" fill="none" stroke="#555"/><path d="M4 9l6-4 1 3-5 3z" fill="#eee" stroke="#555"/></svg>
<span style="left:1036px;top:711px;letter-spacing:-.15px">HRD Logbook: My Logbook</span>
<div class="sep" style="left:1168px;top:711px;height:16px"></div>
<span style="left:1172px;top:711px">RSID</span>
<div class="sep" style="left:1199px;top:711px;height:16px"></div>
<span class="g" style="left:1204px;top:711px">OVR</span><div class="sep" style="left:1230px;top:711px;height:16px"></div>
<span class="g" style="left:1235px;top:711px">CAP</span><div class="sep" style="left:1260px;top:711px;height:16px"></div>
<span class="g" style="left:1265px;top:711px">NUM</span><div class="sep" style="left:1292px;top:711px;height:16px"></div>
<span class="g" style="left:1297px;top:711px">SCRL</span><div class="sep" style="left:1326px;top:711px;height:16px"></div>
<span style="left:1333px;top:711px">19:24</span>

<!-- taskbar -->
<div style="left:0;top:728px;width:1366px;height:40px;background:#1c1c1c"></div>
<svg style="left:15px;top:740px" width="16" height="16"><path d="M0 2.200 6.800 1.300V7.500H0zM7.800 1.100 16 0V7.500H7.800zM0 8.500H6.800V14.700L0 13.800zM7.800 8.500H16V16L7.800 14.900z" fill="#fff"/></svg>
<div style="left:48px;top:728px;width:345px;height:40px;background:#f1f1f1;border-top:1px solid #ccc;box-sizing:border-box"></div>
<svg style="left:60px;top:739px" width="18" height="18"><circle cx="10.500" cy="7" r="5.500" fill="none" stroke="#222" stroke-width="1.200"/><path d="M6.500 11 1 17" stroke="#222" stroke-width="1.200"/></svg>
<span style="left:88px;top:738px;font-family:'Liberation Sans','Noto Sans CJK SC',sans-serif;font-size:15.700px;line-height:19px;letter-spacing:0;color:#333">Πληκτρολογήστε εδώ για αναζήτηση</span>
<svg style="left:406px;top:736px" width="26" height="26"><path d="M13 1C6 1 1 6 1 13c0 6 5 12 11 12 4 0 7-1 9-3-5 2-11 0-11-6 0-3 3-4 6-4 4 0 9 1 9-3C25 4 19 1 13 1z" fill="#1a8fdc"/><path d="M13 1c6 0 12 4 12 9 0 3-3 4-6 3 1-4-3-8-9-8-4 0-7 3-8 6C3 5 7 1 13 1z" fill="#38d27f"/><path d="M1 13c0 6 5 12 11 12 4 0 7-1 9-3-5 2-11 0-11-6 0-2 1-3 3-4-6-1-11 0-12 1z" fill="#0b5fb8"/></svg>
<svg style="left:457px;top:737px" width="22" height="22"><path d="M1 2h8l2 2h10v16H1z" fill="#f3c83f"/><rect x="1" y="7" width="20" height="13" fill="#fbd65e"/><rect x="7" y="14" width="8" height="6" fill="#2a8fd8"/><rect x="10" y="17" width="2" height="3" fill="#fbd65e"/></svg>
<svg style="left:506px;top:736px" width="22" height="24"><path d="M7 7V4a4 4 0 0 1 8 0v3" fill="none" stroke="#ddd" stroke-width="1.500"/><rect x="1" y="6" width="20" height="17" fill="#f2f2f2"/><rect x="7" y="10" width="4" height="4" fill="#e8501f"/><rect x="12" y="10" width="4" height="4" fill="#7fba00"/><rect x="7" y="15" width="4" height="4" fill="#00a4ef"/><rect x="12" y="15" width="4" height="4" fill="#fcb900"/></svg>
<svg style="left:554px;top:737px" width="23" height="23"><circle cx="11.500" cy="11.500" r="11" fill="#db4437"/><path d="M11.500 11.500 22.500 11.500A11 11 0 0 1 6 21z" fill="#f4c20d"/><path d="M11.500 11.500 6 21A11 11 0 0 1 1.500 6z" fill="#3aa655"/><circle cx="11.500" cy="11.500" r="5.500" fill="#fff"/><circle cx="11.500" cy="11.500" r="4" fill="#3a7de8"/></svg>
<svg style="left:603px;top:736px" width="24" height="25"><path d="M12 1C5 2 1 7 1 13s5 11 11 11 11-5 11-11S19 0 12 1z" fill="#1a6fd0"/><path d="M3 10l8-3 10 3v9l-10 3-8-3z" fill="#eef"/><path d="M3 10l9 5 9-5" fill="none" stroke="#99a"/></svg>
<svg style="left:650px;top:736px" width="26" height="26"><circle cx="6" cy="6" r="6" fill="#16169c"/><path d="M6 3v4h3" stroke="#fff" fill="none" stroke-width="1.500"/><path d="M9 12h13v11H9z" fill="#c8c8c8" stroke="#777"/><path d="M12 9v8M16 9v8M20 9v8" stroke="#333" stroke-width="1.500"/></svg>
<svg style="left:701px;top:737px" width="24" height="22"><path d="M7 1h16v20H7z" fill="#21a366"/><path d="M15 1h8v5h-8zM15 11h8v5h-8z" fill="#107c41"/><path d="M7 11h8v5H7z" fill="#185c37"/><rect y="5" width="12" height="12" fill="#0e7038"/><path d="M3 8l6 6M9 8l-6 6" stroke="#fff" stroke-width="1.500"/></svg>
<svg style="left:751px;top:737px" width="22" height="22"><rect width="22" height="22" fill="#ccc"/><rect x="2" y="2" width="18" height="7" fill="#3fbf3f"/><path d="M4 3v5M8 3v5M12 3v5M16 3v5" stroke="#063"/><circle cx="5" cy="14" r="2.500" fill="#c33"/><circle cx="11" cy="14" r="2.500" fill="#d8a020"/><circle cx="17" cy="14" r="2.500" fill="#3a3"/><rect x="2" y="18" width="18" height="2" fill="#888"/></svg>
<div style="left:787px;top:728px;width:48px;height:38px;background:#3c3c3c"></div>
<svg style="left:799px;top:736px" width="24" height="24"><defs><linearGradient id="dm" x2="0" y2="1"><stop offset="0" stop-color="#111"/><stop offset="1" stop-color="#aaa"/></linearGradient></defs><rect width="24" height="24" fill="#999"/><rect x="2" y="2" width="20" height="20" fill="url(#dm)"/><path d="M3 14h5l3-6 2 7 2-2h6" stroke="#2fe03f" fill="none"/></svg>
<svg style="left:848px;top:735px" width="24" height="26"><ellipse cx="10" cy="7" rx="5" ry="6" fill="#222"/><circle cx="12" cy="5" r="2" fill="#eee"/><path d="M5 12l7-2 4 4-4 4-6-2z" fill="#ddd"/><path d="M3 16l14-6 6 6-10 8z" fill="#6fb8f0"/><path d="M9 18l9-5 3 3-8 5z" fill="#e8e8ff"/></svg>
<div class="ub" style="left:399px;width:40px"></div><div class="ub" style="left:448px;width:40px"></div><div class="ub" style="left:595px;width:40px"></div><div class="ub" style="left:644px;width:39px"></div><div class="ub" style="left:693px;width:40px"></div><div class="ub" style="left:742px;width:40px"></div><div class="ub" style="left:787px;width:48px"></div><div class="ub" style="left:840px;width:40px"></div>
<svg style="left:1097px;top:742px" width="14" height="10"><path d="M1 8l6-6 6 6" fill="none" stroke="#eee" stroke-width="1.300"/></svg>
<svg style="left:1121px;top:741px" width="16" height="13"><path d="M2 1v4h3V1" stroke="#eee" fill="none"/><rect x="5" y="4" width="11" height="8" fill="none" stroke="#eee"/><rect x="7" y="6" width="8" height="5" fill="#eee"/></svg>
<svg style="left:1147px;top:740px" width="16" height="16"><path d="M2 14A12 12 0 0 1 14 2M5 14A9 9 0 0 1 14 5M8 14A6 6 0 0 1 14 8" fill="none" stroke="#aaa"/><path d="M11 14A3 3 0 0 1 14 11V14z" fill="#eee"/></svg>
<svg style="left:1169px;top:741px" width="16" height="14"><path d="M1 5h3l4-4v12L4 9H1z" fill="none" stroke="#eee"/><path d="M10 4q2 3 0 6M12.500 2q3 5 0 10" fill="none" stroke="#eee"/></svg>
<svg style="left:1193px;top:741px" width="16" height="13"><path d="M4 12a3.500 3.500 0 0 1-.5-7A4.500 4.500 0 0 1 12 4a4 4 0 0 1 1 8z" fill="#eee"/><path d="M8 5l3 3H9v3H7V8H5z" fill="#1c1c1c"/></svg>
<span style="left:1219px;top:739px;color:#eee;font-size:12px">ENG</span>
<span style="left:1253px;top:732px;width:40px;text-align:center;color:#eee;font-size:12px;line-height:15px">7:24 μμ</span>
<span style="left:1253px;top:748px;color:#eee;font-size:12px;line-height:15px">14/10/2020</span>
<svg style="left:1324px;top:739px" width="17" height="17"><path d="M1 1h15v12H11l-3 3v-3H1z" fill="none" stroke="#eee" stroke-width="1.200"/></svg>
</body></html>
